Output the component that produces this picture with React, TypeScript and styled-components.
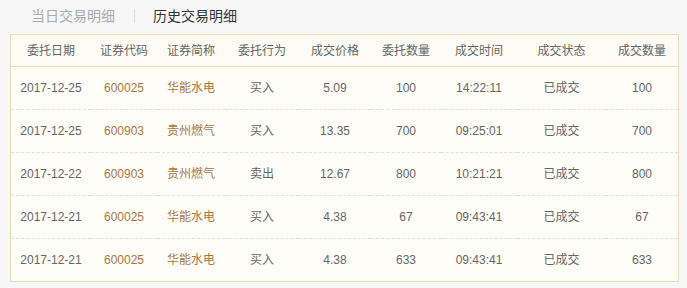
import styled, { createGlobalStyle } from 'styled-components'

const GlobalStyle = createGlobalStyle`
    body {
        margin: 0;
        background: #f7f7f7;
        font-family: "Liberation Sans", Arial, "Noto Sans CJK SC", sans-serif;
    }
`

const Page = styled.div`
    width: 687px;
    height: 288px;
    padding: 0 10px;
    box-sizing: border-box;
`

const Tabs = styled.div`
    display: flex;
    align-items: center;
    height: 34px;
    padding: 0 0 2px 21px;
    box-sizing: border-box;
`

const Tab = styled.span<{ $active?: boolean }>`
    font-size: 14px;
    line-height: 18px;
    color: ${props => (props.$active ? '#333' : '#aaa')};
`

const Divider = styled.i`
    display: block;
    width: 1px;
    height: 14px;
    margin: 0 18px 0 19px;
    background: #d8d8d8;
`

const Table = styled.table`
    width: 667px;
    border-collapse: collapse;
    table-layout: fixed;
    background: #fffdf8;
    border: 1px solid #e8dfb8;
`

const Th = styled.th<{ $w: number }>`
    width: ${props => props.$w}px;
    height: 31px;
    padding: 0;
    font-size: 12px;
    line-height: 14px;
    font-weight: normal;
    color: #666;
    text-align: center;
    background: #fdfcf4;
    border-bottom: 1px solid #e8dfb8;
`

const Row = styled.tr`
    td {
        border-bottom: 1px dashed #e6ded6;
    }
    &:last-child td {
        border-bottom: none;
    }
`

const Td = styled.td<{ $stock?: boolean }>`
    height: 42px;
    padding: 0;
    font-size: 12px;
    line-height: 14px;
    text-align: center;
    color: ${props => (props.$stock ? '#a9783f' : '#666')};
`

const columns = [
    { title: '委托日期', w: 80 },
    { title: '证券代码', w: 66 },
    { title: '证券简称', w: 68 },
    { title: '委托行为', w: 74 },
    { title: '成交价格', w: 72 },
    { title: '委托数量', w: 70 },
    { title: '成交时间', w: 76 },
    { title: '成交状态', w: 89 },
    { title: '成交数量', w: 72 },
]

const trades = [
    ['2017-12-25', '600025', '华能水电', '买入', '5.09', '100', '14:22:11', '已成交', '100'],
    ['2017-12-25', '600903', '贵州燃气', '买入', '13.35', '700', '09:25:01', '已成交', '700'],
    ['2017-12-22', '600903', '贵州燃气', '卖出', '12.67', '800', '10:21:21', '已成交', '800'],
    ['2017-12-21', '600025', '华能水电', '买入', '4.38', '67', '09:43:41', '已成交', '67'],
    ['2017-12-21', '600025', '华能水电', '买入', '4.38', '633', '09:43:41', '已成交', '633'],
]

function App() {
    return (
        <Page>
            <GlobalStyle />
            <Tabs>
                <Tab>当日交易明细</Tab>
                <Divider />
                <Tab $active>历史交易明细</Tab>
            </Tabs>
            <Table>
                <thead>
                    <tr>
                        {columns.map(col => <Th key={col.title} $w={col.w}>{col.title}</Th>)}
                    </tr>
                </thead>
                <tbody>
                    {trades.map((row, i) => (
                        <Row key={i}>
                            {row.map((cell, j) => <Td key={j} $stock={j === 1 || j === 2}>{cell}</Td>)}
                        </Row>
                    ))}
                </tbody>
            </Table>
        </Page>
    )
}

export default App
